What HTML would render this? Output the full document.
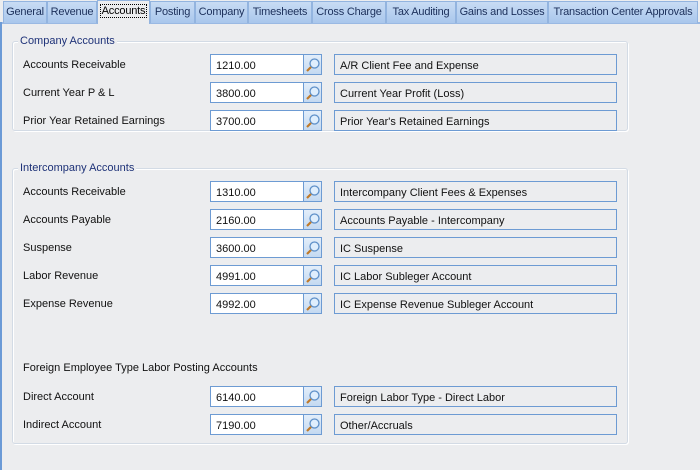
<!DOCTYPE html>
<html><head><meta charset="utf-8"><style>
*{margin:0;padding:0;box-sizing:border-box}
body{width:700px;height:470px;background:#ecedef;font-family:"Liberation Sans",sans-serif;font-size:11px;color:#111;position:relative;overflow:hidden}
.tabs{position:absolute;left:0;top:0;width:700px;height:24px;background:#ecedef}
.tab{position:absolute;top:1px;height:22px;background:linear-gradient(#c8dcf4,#a9c7ec);border:1px solid #93b4df;border-bottom:none;line-height:21px;text-align:center;color:#1b2f5a;font-size:11px;letter-spacing:-0.2px;white-space:nowrap;overflow:hidden}
.tab.sel{background:#ecedef;top:0;height:24px;color:#000}
.tab.sel span{outline:1px dotted #000;padding:0 1px}
.line{position:absolute;left:0;top:22px;width:700px;height:2px;background:#9ab9e3}
.lb{position:absolute;left:0;top:22px;width:2px;height:448px;background:#6b9ad6}
.grp{position:absolute;border:1px solid #d3dbe5;border-radius:3px;box-shadow:1px 1px 0 #fff inset,1px 1px 0 #fff}
.gt{position:absolute;background:#ecedef;color:#1e3278;font-size:11px;padding:0 2px;line-height:13px}
.lbl{position:absolute;left:23px;font-size:11px;line-height:13px}
.in{position:absolute;left:210px;width:94px;height:21px;background:#fff;border:1px solid #6d9bd3;padding-left:5px;line-height:22px;font-size:11px}
.btn{position:absolute;left:304px;width:18px;height:21px;background:linear-gradient(#e3eefa,#c4d9f1);border:1px solid #6d9bd3;border-left:none}
.btn svg{position:absolute;left:1px;top:2px}
.ds{position:absolute;left:334px;width:283px;height:21px;border:1px solid #6d9bd3;padding-left:5px;line-height:22px;font-size:11px}
</style></head><body>
<div class="tabs">
<div class="line"></div>
<div class="tab" style="left:3px;width:44px">General</div>
<div class="tab" style="left:47px;width:50px">Revenue</div>
<div class="tab sel" style="left:97px;width:53px"><span>Accounts</span></div>
<div class="tab" style="left:150px;width:45px">Posting</div>
<div class="tab" style="left:195px;width:53px">Company</div>
<div class="tab" style="left:248px;width:64px">Timesheets</div>
<div class="tab" style="left:312px;width:74px">Cross Charge</div>
<div class="tab" style="left:386px;width:70px">Tax Auditing</div>
<div class="tab" style="left:456px;width:92px">Gains and Losses</div>
<div class="tab" style="left:548px;width:150px">Transaction Center Approvals</div>
</div>
<div class="lb"></div>

<div class="grp" style="left:12px;top:41px;width:616px;height:90px"></div>
<div class="gt" style="left:18px;top:35px">Company Accounts</div>
<div class="grp" style="left:12px;top:168px;width:616px;height:276px"></div>
<div class="gt" style="left:18px;top:162px">Intercompany Accounts</div>

<div class="lbl" style="top:59px">Accounts Receivable</div>
<div class="in" style="top:54px">1210.00</div><div class="btn" style="top:54px"><svg width="16" height="16"><circle cx="9.5" cy="6.5" r="4.5" fill="#dfeefd" stroke="#5d8fc8" stroke-width="1.3"/><line x1="6" y1="10" x2="2" y2="14" stroke="#c07a2a" stroke-width="2.2"/></svg></div>
<div class="ds" style="top:54px">A/R Client Fee and Expense</div>

<div class="lbl" style="top:87px">Current Year P &amp; L</div>
<div class="in" style="top:82px">3800.00</div><div class="btn" style="top:82px"><svg width="16" height="16"><circle cx="9.5" cy="6.5" r="4.5" fill="#dfeefd" stroke="#5d8fc8" stroke-width="1.3"/><line x1="6" y1="10" x2="2" y2="14" stroke="#c07a2a" stroke-width="2.2"/></svg></div>
<div class="ds" style="top:82px">Current Year Profit (Loss)</div>

<div class="lbl" style="top:115px">Prior Year Retained Earnings</div>
<div class="in" style="top:110px">3700.00</div><div class="btn" style="top:110px"><svg width="16" height="16"><circle cx="9.5" cy="6.5" r="4.5" fill="#dfeefd" stroke="#5d8fc8" stroke-width="1.3"/><line x1="6" y1="10" x2="2" y2="14" stroke="#c07a2a" stroke-width="2.2"/></svg></div>
<div class="ds" style="top:110px">Prior Year's Retained Earnings</div>

<div class="lbl" style="top:186px">Accounts Receivable</div>
<div class="in" style="top:181px">1310.00</div><div class="btn" style="top:181px"><svg width="16" height="16"><circle cx="9.5" cy="6.5" r="4.5" fill="#dfeefd" stroke="#5d8fc8" stroke-width="1.3"/><line x1="6" y1="10" x2="2" y2="14" stroke="#c07a2a" stroke-width="2.2"/></svg></div>
<div class="ds" style="top:181px">Intercompany Client Fees &amp; Expenses</div>

<div class="lbl" style="top:214px">Accounts Payable</div>
<div class="in" style="top:209px">2160.00</div><div class="btn" style="top:209px"><svg width="16" height="16"><circle cx="9.5" cy="6.5" r="4.5" fill="#dfeefd" stroke="#5d8fc8" stroke-width="1.3"/><line x1="6" y1="10" x2="2" y2="14" stroke="#c07a2a" stroke-width="2.2"/></svg></div>
<div class="ds" style="top:209px">Accounts Payable - Intercompany</div>

<div class="lbl" style="top:242px">Suspense</div>
<div class="in" style="top:237px">3600.00</div><div class="btn" style="top:237px"><svg width="16" height="16"><circle cx="9.5" cy="6.5" r="4.5" fill="#dfeefd" stroke="#5d8fc8" stroke-width="1.3"/><line x1="6" y1="10" x2="2" y2="14" stroke="#c07a2a" stroke-width="2.2"/></svg></div>
<div class="ds" style="top:237px">IC Suspense</div>

<div class="lbl" style="top:270px">Labor Revenue</div>
<div class="in" style="top:265px">4991.00</div><div class="btn" style="top:265px"><svg width="16" height="16"><circle cx="9.5" cy="6.5" r="4.5" fill="#dfeefd" stroke="#5d8fc8" stroke-width="1.3"/><line x1="6" y1="10" x2="2" y2="14" stroke="#c07a2a" stroke-width="2.2"/></svg></div>
<div class="ds" style="top:265px">IC Labor Subleger Account</div>

<div class="lbl" style="top:298px">Expense Revenue</div>
<div class="in" style="top:293px">4992.00</div><div class="btn" style="top:293px"><svg width="16" height="16"><circle cx="9.5" cy="6.5" r="4.5" fill="#dfeefd" stroke="#5d8fc8" stroke-width="1.3"/><line x1="6" y1="10" x2="2" y2="14" stroke="#c07a2a" stroke-width="2.2"/></svg></div>
<div class="ds" style="top:293px">IC Expense Revenue Subleger Account</div>

<div class="lbl" style="top:362px">Foreign Employee Type Labor Posting Accounts</div>

<div class="lbl" style="top:391px">Direct Account</div>
<div class="in" style="top:386px">6140.00</div><div class="btn" style="top:386px"><svg width="16" height="16"><circle cx="9.5" cy="6.5" r="4.5" fill="#dfeefd" stroke="#5d8fc8" stroke-width="1.3"/><line x1="6" y1="10" x2="2" y2="14" stroke="#c07a2a" stroke-width="2.2"/></svg></div>
<div class="ds" style="top:386px">Foreign Labor Type - Direct Labor</div>

<div class="lbl" style="top:419px">Indirect Account</div>
<div class="in" style="top:414px">7190.00</div><div class="btn" style="top:414px"><svg width="16" height="16"><circle cx="9.5" cy="6.5" r="4.5" fill="#dfeefd" stroke="#5d8fc8" stroke-width="1.3"/><line x1="6" y1="10" x2="2" y2="14" stroke="#c07a2a" stroke-width="2.2"/></svg></div>
<div class="ds" style="top:414px">Other/Accruals</div>
</body></html>
